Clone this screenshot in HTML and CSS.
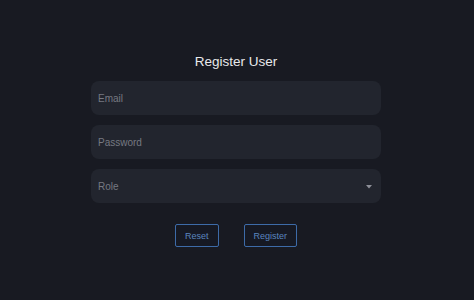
FILE: index.html
```html
<!DOCTYPE html>
<html>
<head>
<meta charset="utf-8">
<link rel="stylesheet" href="styles.css">
</head>
<body>
<main class="page">
  <form class="form">
    <h1 class="title">Register User</h1>
    <input class="field" type="email" placeholder="Email">
    <input class="field" type="password" placeholder="Password">
    <div class="field select">
      <span class="select-label">Role</span>
      <svg class="arrow" width="6" height="4" viewBox="0 0 6 4"><path d="M0 0 L6 0 L3 3.5 Z" fill="#8e9099"/></svg>
    </div>
    <div class="actions">
      <button class="btn" type="button">Reset</button>
      <button class="btn" type="button">Register</button>
    </div>
  </form>
</main>
</body>
</html>
```
FILE: styles.css
```css
* { box-sizing: border-box; }
html, body {
  margin: 0;
  padding: 0;
  width: 474px;
  height: 300px;
  background: #181a22;
  font-family: "Liberation Sans", Arial, sans-serif;
  overflow: hidden;
}
.page {
  display: flex;
  justify-content: center;
  padding-top: 53px;
  padding-right: 2px;
}
.form {
  width: 290px;
  display: flex;
  flex-direction: column;
  gap: 10px;
}
.title {
  margin: 0;
  height: 18px;
  line-height: 18px;
  font-size: 13.5px;
  font-weight: normal;
  color: #e8e9ec;
  text-align: center;
}
.field {
  display: block;
  width: 290px;
  height: 34px;
  border: none;
  border-radius: 8px;
  background: #22252e;
  padding: 0 7px;
  font-family: "Liberation Sans", Arial, sans-serif;
  font-size: 10px;
  color: #d0d2d8;
  outline: none;
}
.field::placeholder { color: #767982; }
.select {
  display: flex;
  align-items: center;
  justify-content: space-between;
  padding: 0 9px 0 7px;
}
.select-label { color: #767982; font-size: 10px; }
.arrow { display: block; margin-top: 1px; }
.actions {
  display: flex;
  justify-content: center;
  gap: 25px;
  margin-top: 11px;
}
.btn {
  height: 23px;
  padding: 0 9px;
  background: #161923;
  border: 1px solid #3d6ba8;
  border-radius: 2px;
  color: #5a85bf;
  font-family: "Liberation Sans", Arial, sans-serif;
  font-size: 9px;
}
```
